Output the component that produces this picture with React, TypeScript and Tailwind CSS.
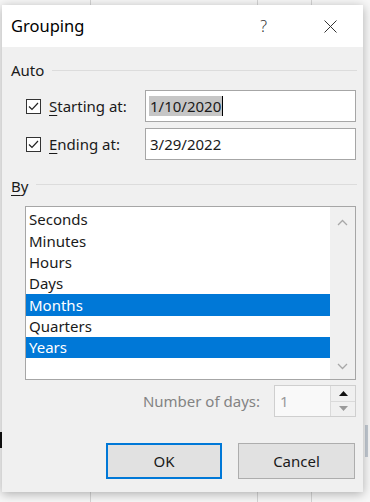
import React from "react";

const font = { fontFamily: '"Noto Sans", "Open Sans", sans-serif' };

function Check() {
  return (
    <div className="w-[15px] h-[15px] border border-[#333] bg-white flex items-center justify-center">
      <svg width="11" height="9" viewBox="0 0 11 9">
        <path d="M1 4.5 L4 7.5 L10 1" fill="none" stroke="#222" strokeWidth="1.2" />
      </svg>
    </div>
  );
}

function Chevron({ up }: { up?: boolean }) {
  return (
    <svg width="11" height="7" viewBox="0 0 11 7">
      <path d={up ? "M1 6 L5.5 1.5 L10 6" : "M1 1 L5.5 5.5 L10 1"} fill="none" stroke="#a8a8a8" strokeWidth="1.3" />
    </svg>
  );
}

const items = ["Seconds", "Minutes", "Hours", "Days", "Months", "Quarters", "Years"];
const selected = new Set(["Months", "Years"]);

export default function App() {
  return (
    <div className="relative w-[370px] h-[502px] bg-[#f7f7f7] overflow-hidden" style={font}>
      {/* spreadsheet behind */}
      <div className="absolute left-[90px] top-0 w-px h-full bg-[#d4d4d4]" />
      <div className="absolute left-[257px] top-0 w-px h-full bg-[#d4d4d4]" />
      <div className="absolute left-[311px] top-0 w-px h-full bg-[#d4d4d4]" />
      <div className="absolute left-0 top-[432px] w-[2px] h-[16px] bg-[#111]" />
      <div className="absolute left-[365px] top-[425px] w-[3px] h-[32px] bg-[#c3cad3]" />

      {/* dialog */}
      <div className="absolute left-[2px] top-[5px] w-[361px] h-[487px] bg-[#f0f0f0] shadow-[0_2px_10px_rgba(0,0,0,0.3)] flex flex-col text-[15px] text-[#1a1a1a]">
        {/* title bar */}
        <div className="h-[42px] bg-white flex items-center pl-[9px] shrink-0">
          <span className="text-[16.5px] text-black">Grouping</span>
          <span className="ml-auto mr-[57px] text-[16px] text-[#333] font-light">?</span>
          <svg width="13" height="13" viewBox="0 0 13 13" className="mr-[26px]">
            <path d="M0.5 0.5 L12.5 12.5 M12.5 0.5 L0.5 12.5" stroke="#333" strokeWidth="1" />
          </svg>
        </div>

        {/* Auto group */}
        <div className="flex items-center h-[22px] mt-[12px] pl-[9px] pr-[6px]">
          <span>Auto</span>
          <div className="flex-1 h-px bg-[#dcdcdc] ml-[8px]" />
        </div>

        <div className="flex items-center mt-[9px] h-[32px] pl-[24px] pr-[7px]">
          <Check />
          <span className="ml-[8px] w-[88px]">
            <span className="underline underline-offset-[3px]">S</span>tarting at:
          </span>
          <div className="ml-auto w-[211px] h-[32px] bg-white border border-[#a6a6a6] flex items-center pl-[3px]">
            <span className="bg-[#c6c6c6] leading-[20px] pl-[1px] pr-[1px] border-r border-black">1/10/2020</span>
          </div>
        </div>

        <div className="flex items-center mt-[6px] h-[32px] pl-[24px] pr-[7px]">
          <Check />
          <span className="ml-[8px]">
            <span className="underline underline-offset-[3px]">E</span>nding at:
          </span>
          <div className="ml-auto w-[211px] h-[32px] bg-white border border-[#a6a6a6] flex items-center pl-[4px]">
            <span>3/29/2022</span>
          </div>
        </div>

        {/* By group */}
        <div className="flex items-center h-[22px] mt-[15px] pl-[9px] pr-[6px]">
          <span>
            <span className="underline underline-offset-[3px]">B</span>y
          </span>
          <div className="flex-1 h-px bg-[#dcdcdc] ml-[8px] -mt-[4px]" />
        </div>

        <div className="ml-[23px] mr-[7px] mt-[9px] h-[174px] bg-white border border-[#a6a6a6] flex">
          <div className="flex-1 flex flex-col pt-[2px]">
            {items.map((it) => (
              <div
                key={it}
                className={
                  "h-[21.33px] flex items-center pl-[3px] " +
                  (selected.has(it) ? "bg-[#0078d7] text-white" : "")
                }
              >
                {it}
              </div>
            ))}
          </div>
          <div className="w-[25px] bg-[#f0f0f0] flex flex-col items-center justify-between pt-[12px] pb-[9px]">
            <Chevron up />
            <Chevron />
          </div>
        </div>

        {/* Number of days */}
        <div className="flex items-center justify-end mt-[5px] pr-[7px] h-[32px]">
          <span className="text-[#838383] mr-[14px]">Number of days:</span>
          <div className="w-[82px] h-[32px] border border-[#cfcfcf] bg-[#f9f9f9] flex">
            <span className="flex-1 pl-[5px] text-[#9a9a9a] flex items-center">1</span>
            <div className="w-[25px] flex flex-col border-l border-[#dadada]">
              <div className="flex-1 flex items-center justify-center border-b border-[#dadada] bg-[#f0f0f0]">
                <svg width="9" height="5" viewBox="0 0 9 5">
                  <path d="M0 5 L4.5 0 L9 5 Z" fill="#111" />
                </svg>
              </div>
              <div className="flex-1 flex items-center justify-center bg-[#f0f0f0]">
                <svg width="9" height="5" viewBox="0 0 9 5">
                  <path d="M0 0 L4.5 5 L9 0 Z" fill="#9a9a9a" />
                </svg>
              </div>
            </div>
          </div>
        </div>

        {/* Buttons */}
        <div className="flex justify-end gap-[16px] mt-[26px] pr-[8px]">
          <button className="w-[116px] h-[36px] bg-[#e1e1e1] border-2 border-[#0078d7] text-[15px] text-[#1a1a1a]">
            OK
          </button>
          <button className="w-[117px] h-[36px] bg-[#e1e1e1] border border-[#adadad] text-[15px] text-[#1a1a1a]">
            Cancel
          </button>
        </div>
      </div>
    </div>
  );
}
